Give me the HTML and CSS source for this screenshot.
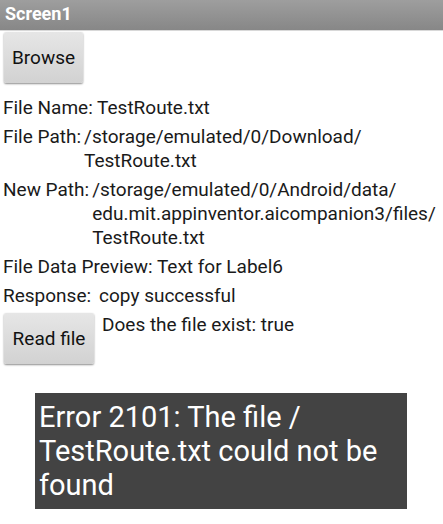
FILE: index.html
```html
<!DOCTYPE html>
<html>
<head>
<meta charset="utf-8">
<link rel="stylesheet" href="styles.css">
</head>
<body>
<div class="titlebar">Screen1</div>
<div class="screen">
  <button class="btn browse">Browse</button>
  <div class="labels">
    <div class="row">File Name: TestRoute.txt</div>
    <div class="row">
      <span class="key">File Path:</span>
      <span class="val"><span class="ln">/storage/emulated/0/Download/</span><span class="ln">TestRoute.txt</span></span>
    </div>
    <div class="row">
      <span class="key">New Path:</span>
      <span class="val"><span class="ln">/storage/emulated/0/Android/data/</span><span class="ln">edu.mit.appinventor.aicompanion3/files/</span><span class="ln">TestRoute.txt</span></span>
    </div>
    <div class="row">File Data Preview: Text for Label6</div>
    <div class="row">
      <span class="key">Response:</span>
      <span class="val resp">copy successful</span>
    </div>
  </div>
  <div class="readrow">
    <button class="btn read">Read file</button>
    <span class="exist">Does the file exist: true</span>
  </div>
  <div class="toast">Error 2101: The file /<br>TestRoute.txt could not be<br>found</div>
</div>
</body>
</html>
```
FILE: styles.css
```css
html, body {
  margin: 0;
  padding: 0;
  background: #ffffff;
}
body {
  width: 443px;
  height: 524px;
  overflow: hidden;
  font-family: Roboto, "Noto Sans", sans-serif;
  color: #1a1a1a;
}
.titlebar {
  height: 31px;
  background: linear-gradient(#9e9e9e, #878787);
  border-bottom: 1px solid #d8d8d8;
  color: #ffffff;
  font-weight: bold;
  font-size: 18px;
  line-height: 28px;
  padding-left: 5px;
  box-sizing: border-box;
}
.screen {
  display: flex;
  flex-direction: column;
  align-items: flex-start;
}
.btn {
  font-family: Roboto, "Noto Sans", sans-serif;
  font-size: 19px;
  color: #111;
  background: linear-gradient(#e6e6e6, #d2d2d2);
  border: none;
  border-radius: 2px;
  box-shadow: 0 1px 2px rgba(0,0,0,0.45);
  padding: 0;
  height: 51px;
}
.browse {
  width: 79px;
  margin: 1px 0 0 4px;
}
.labels {
  margin-top: 13px;
  display: flex;
  flex-direction: column;
  gap: 5px;
  font-size: 19px;
  line-height: 24px;
  padding-left: 3px;
}
.row {
  display: flex;
  white-space: nowrap;
}
.key {
  margin-right: 3px;
}
.val {
  display: flex;
  flex-direction: column;
}
.resp {
  margin-left: 5px;
}
.readrow {
  margin-top: 5px;
  display: flex;
  align-items: flex-start;
  padding-left: 4px;
}
.read {
  width: 90px;
}
.exist {
  font-size: 19px;
  line-height: 24px;
  margin-left: 8px;
}
.toast {
  margin: 29px 0 0 35px;
  width: 372px;
  height: 116px;
  box-sizing: border-box;
  background: #434343;
  color: #ffffff;
  font-size: 29px;
  line-height: 34px;
  padding: 7px 4px;
}
```
